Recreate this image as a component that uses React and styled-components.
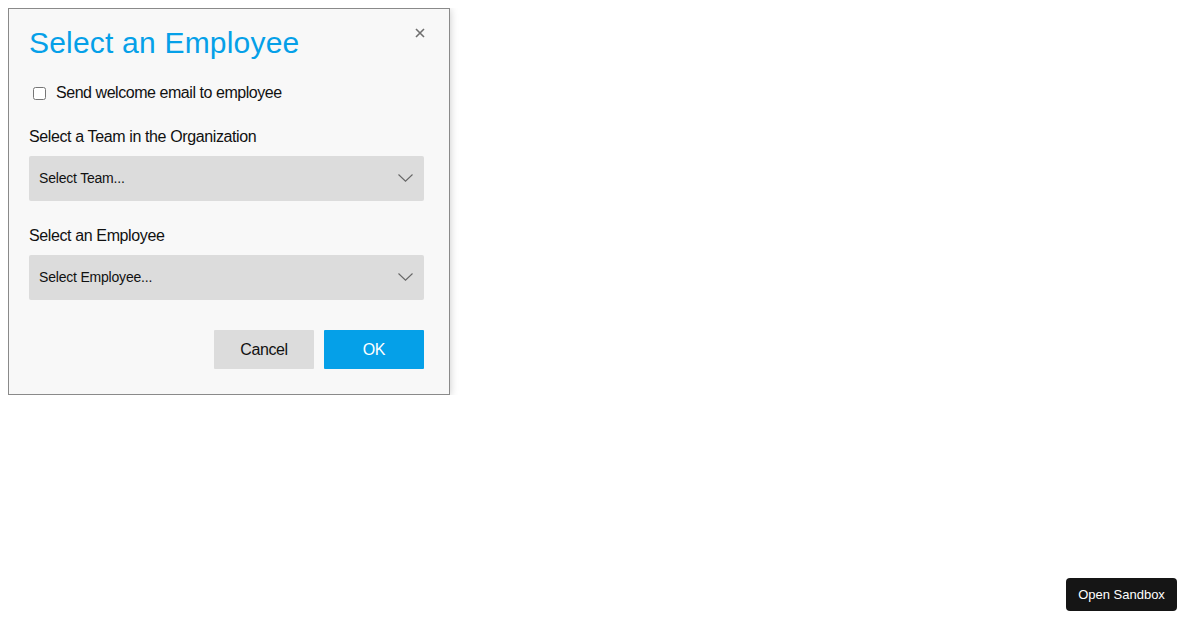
import React from "react";
import { styled, createGlobalStyle } from "styled-components";

const GlobalStyle = createGlobalStyle`
  body {
    margin: 8px;
    background: #ffffff;
    font-family: "Liberation Sans", Arial, sans-serif;
    color: #111111;
  }
`;

const Dialog = styled.div`
  box-sizing: border-box;
  width: 442px;
  padding: 17px 25px 25px 20px;
  background-color: #f8f8f8;
  border: 1px solid #8a8a8a;
  box-shadow: 0 1px 8px rgba(0, 0, 0, 0.22);
  display: flex;
  flex-direction: column;
`;

const Header = styled.div`
  display: flex;
  justify-content: space-between;
  align-items: flex-start;
`;

const Title = styled.h2`
  margin: 0;
  font-size: 30px;
  font-weight: 400;
  line-height: 34px;
  letter-spacing: 0.2px;
  color: #05a0e8;
`;

const Close = styled.button`
  border: 0;
  background: none;
  padding: 0;
  margin-top: 2px;
  margin-right: -1px;
  width: 10px;
  height: 10px;
  cursor: pointer;
  display: flex;

  > svg {
    width: 10px;
    height: 10px;
  }
`;

const CheckRow = styled.label`
  display: flex;
  align-items: center;
  gap: 10px;
  margin-top: 24px;
  font-size: 16px;
  line-height: 18px;
  letter-spacing: -0.45px;

  > input {
    margin: 0 0 0 4px;
    width: 13px;
    height: 13px;
  }
`;

const FieldLabel = styled.div`
  font-size: 16px;
  line-height: 18px;
  letter-spacing: -0.38px;
  margin-top: 26px;
  margin-bottom: 10px;
`;

const SelectBox = styled.div`
  box-sizing: border-box;
  height: 45px;
  padding: 0 11px 1px 10px;
  background-color: #dcdcdc;
  border-radius: 2px;
  display: flex;
  align-items: center;
  justify-content: space-between;
  font-size: 14px;
  letter-spacing: -0.2px;
  color: #111111;
  cursor: pointer;

  > svg {
    width: 15px;
    height: 8px;
  }
`;

const Footer = styled.div`
  display: flex;
  justify-content: flex-end;
  gap: 10px;
  margin-top: 30px;
`;

const Button = styled.button`
  width: 100px;
  height: 39px;
  padding: 1px 0 0;
  border: 0;
  border-radius: 1px;
  font-family: "Liberation Sans", Arial, sans-serif;
  font-size: 16px;
  letter-spacing: -0.4px;
  background-color: ${(props) => (props.primary ? "#05a0e8" : "#dcdcdc")};
  color: ${(props) => (props.primary ? "#ffffff" : "#111111")};
  cursor: pointer;
`;

const SandboxButton = styled.button`
  position: fixed;
  right: 23px;
  bottom: 19px;
  width: 111px;
  height: 33px;
  border: 0;
  border-radius: 4px;
  background-color: #151515;
  color: #ffffff;
  font-family: "Liberation Sans", Arial, sans-serif;
  font-size: 13px;
  cursor: pointer;
`;

const Chevron = () => (
  <svg viewBox="0 0 15 8" fill="none">
    <path d="M0.5 0.5 L7.5 7.2 L14.5 0.5" stroke="#666" strokeWidth="1.1" />
  </svg>
);

const Select = ({ placeholder }) => (
  <SelectBox>
    <span>{placeholder}</span>
    <Chevron />
  </SelectBox>
);

const App = () => {
  return (
    <>
      <GlobalStyle />
      <Dialog>
        <Header>
          <Title>Select an Employee</Title>
          <Close aria-label="Close">
            <svg viewBox="0 0 10 10">
              <path d="M1 1 L9 9 M9 1 L1 9" stroke="#6f6f6f" strokeWidth="1.6" />
            </svg>
          </Close>
        </Header>
        <CheckRow>
          <input type="checkbox" />
          Send welcome email to employee
        </CheckRow>
        <FieldLabel>Select a Team in the Organization</FieldLabel>
        <Select placeholder="Select Team..." />
        <FieldLabel>Select an Employee</FieldLabel>
        <Select placeholder="Select Employee..." />
        <Footer>
          <Button>Cancel</Button>
          <Button primary>OK</Button>
        </Footer>
      </Dialog>
      <SandboxButton>Open Sandbox</SandboxButton>
    </>
  );
};

export default App;
